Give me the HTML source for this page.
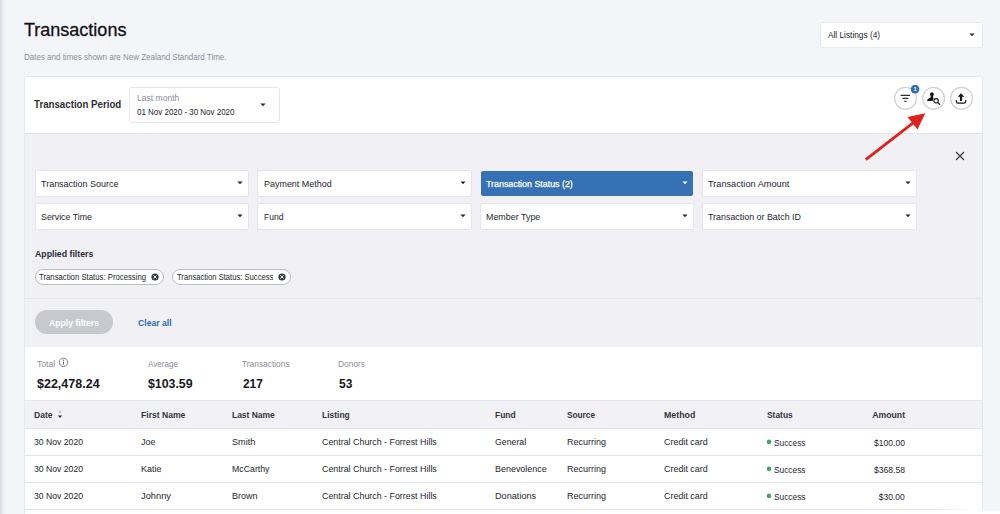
<!DOCTYPE html>
<html lang="en">
<head>
<meta charset="utf-8">
<title>Transactions</title>
<style>
html,body{margin:0;padding:0}
body{width:1000px;height:514px;overflow:hidden;position:relative;background:#f4f5f9;font-family:"Liberation Sans", sans-serif}
h1,h2,p,label,strong,a{margin:0;padding:0;font-weight:normal;text-decoration:none}
.a{position:absolute}
.t{position:absolute;white-space:nowrap;line-height:1;display:block}
.med{-webkit-text-stroke:0.25px #fff}
.ttl{-webkit-text-stroke:0.3px #101014}
.box{position:absolute;box-sizing:border-box}
.edge{left:0;top:0;width:5px;height:514px;background:linear-gradient(to right,#d4d7e1,#e4e6ee 35%,#f0f1f6 70%,#f4f5f9)}
.card{background:#fff;border:1px solid #e7e8ef;border-radius:2px}
.panel{background:#f0f0f5;border-top:1.5px solid #e3e3ea}
.rule{height:1px;background:#e4e4ea}
.dd{position:absolute;box-sizing:border-box;background:#fff;border:1px solid #e4e5ec;border-radius:2px;height:27px}
.dd.on{background:#3571b4;border-color:#3571b4}
.chip{position:absolute;box-sizing:border-box;background:#fff;border:1px solid #bcbcc5;border-radius:8px;height:16px}
.pill{border-radius:12px;background:#c8c9cf}
.thead{background:#f1f1f6;border-top:1px solid #e6e6ed}
.sep{position:absolute;left:25px;width:957px;height:1px;background:#e4e4eb}
.dot{width:4.4px;height:4.4px;border-radius:50%;background:#3fa66d}
</style>
</head>
<body>
<div class="a edge"></div>
<header>
<h1 class="t ttl" style="top:21px;font-size:18.6px;color:#101014;left:24.3px;transform:scaleX(0.9682);transform-origin:left 50%;">Transactions</h1>
<p class="t" style="top:53px;font-size:8.7px;color:#8d8d97;left:23.6px;transform:scaleX(0.9196);transform-origin:left 50%;">Dates and times shown are New Zealand Standard Time.</p>
<div class="select listing">
<div class="dd" style="left:820px;top:22px;width:163px;height:26px;border-color:#e9eaf1"></div>
<span class="t" style="top:31px;font-size:9.3px;color:#25252d;left:828px;transform:scaleX(0.8906);transform-origin:left 50%;">All Listings (4)</span>
<svg class="a" style="left:969px;top:33.1px" width="6" height="4" viewBox="0 0 6 4"><path d="M0.4 0.5H5.6L3 3.3Z" fill="#26262e"/></svg>
</div>
</header>
<main>
<div class="box card" style="left:24px;top:76px;width:959px;height:460px"></div>
<section class="toolbar">
<label class="t" style="top:99px;font-size:10.6px;color:#2e2e36;font-weight:bold;left:34.2px;transform:scaleX(0.9153);transform-origin:left 50%;">Transaction Period</label>
<div class="select period">
<div class="dd" style="left:128.7px;top:87px;width:151.3px;height:35.7px;border-color:#e5e7ef;border-radius:3px"></div>
<span class="t" style="top:94px;font-size:9px;color:#8d8d97;left:136.8px;transform:scaleX(0.9499);transform-origin:left 50%;">Last month</span>
<span class="t" style="top:108px;font-size:9.3px;color:#25252d;left:137px;transform:scaleX(0.8574);transform-origin:left 50%;">01 Nov 2020 - 30 Nov 2020</span>
<svg class="a" style="left:260.1px;top:103.1px" width="6" height="4" viewBox="0 0 6 4"><path d="M0.4 0.5H5.6L3 3.3Z" fill="#26262e"/></svg>
</div>
<div class="actions">
<div class="iconbtn" role="button"><svg class="a" style="left:892px;top:85px" width="28" height="28" viewBox="892 85 28 28"><circle cx="905.5" cy="98.3" r="10.9" fill="#fff" stroke="#cfd0d9" stroke-width="1.2"/><path d="M900.6 95.3H910.2M902.5 98.3H908.3M904.4 101.3H906.5" stroke="#2d2d36" stroke-width="1.3" fill="none"/><circle cx="915.1" cy="89.1" r="4.3" fill="#2f6fb7"/><text x="915.1" y="91.2" font-family="Liberation Sans, sans-serif" font-size="6" font-weight="bold" fill="#fff" text-anchor="middle">1</text></svg></div>
<div class="iconbtn" role="button"><svg class="a" style="left:920px;top:85px" width="28" height="28" viewBox="920 85 28 28"><circle cx="933.6" cy="98.3" r="10.9" fill="#fff" stroke="#cfd0d9" stroke-width="1.2"/><ellipse cx="931.9" cy="94.3" rx="1.9" ry="2.1" fill="#15151b"/><path d="M927.1 100.9C927.1 98.9 928.9 98.3 930.7 97.5V95.8H933.1V97.5C934.2 98 934.9 98.6 934.9 100.9Z" fill="#15151b"/><circle cx="936.1" cy="100.8" r="3.3" fill="#fff"/><circle cx="936.1" cy="100.8" r="2.2" fill="#fff" stroke="#15151b" stroke-width="1.1"/><path d="M937.8 102.6L939.7 104.4" stroke="#15151b" stroke-width="1.3" stroke-linecap="round"/></svg></div>
<div class="iconbtn" role="button"><svg class="a" style="left:948px;top:85px" width="28" height="28" viewBox="948 85 28 28"><circle cx="961.5" cy="98.3" r="10.9" fill="#fff" stroke="#cfd0d9" stroke-width="1.2"/><path d="M961 93.3L964.3 96.8H962.1V100.9H959.9V96.8H957.7Z" fill="#15151b"/><path d="M956.4 100.7V101.5C956.4 102.6 957.2 103.2 958.2 103.2H963.800C964.800 103.2 965.6 102.6 965.6 101.5V100.7" fill="none" stroke="#15151b" stroke-width="1.3" stroke-linecap="round"/></svg></div>
</div>
</section>
<section class="filters">
<div class="box panel" style="left:25px;top:133px;width:957px;height:214px"></div>
<div class="a rule" style="left:25px;top:298px;width:957px"></div>
<svg class="a" style="left:955px;top:150.8px" width="10" height="10" viewBox="0 0 10 10"><path d="M1 1L9 9M9 1L1 9" stroke="#3c3c44" stroke-width="1.2" fill="none"/></svg>
<div class="select">
<div class="dd" style="left:35px;top:170px;width:214px"></div>
<span class="t" style="top:180px;font-size:9.3px;color:#25252d;left:41px;transform:scaleX(0.9654);transform-origin:left 50%;">Transaction Source</span>
<svg class="a" style="left:236.7px;top:181.3px" width="6" height="4" viewBox="0 0 6 4"><path d="M0.4 0.5H5.6L3 3.3Z" fill="#26262e"/></svg>
</div>
<div class="select">
<div class="dd" style="left:257px;top:170px;width:215px"></div>
<span class="t" style="top:180px;font-size:9.3px;color:#25252d;left:263.5px;transform:scaleX(0.9633);transform-origin:left 50%;">Payment Method</span>
<svg class="a" style="left:459.7px;top:181.3px" width="6" height="4" viewBox="0 0 6 4"><path d="M0.4 0.5H5.6L3 3.3Z" fill="#26262e"/></svg>
</div>
<div class="select active">
<div class="dd on" style="left:481px;top:171px;width:212px;height:25px"></div>
<span class="t med" style="top:180px;font-size:9.3px;color:#ffffff;left:485.7px;transform:scaleX(0.9525);transform-origin:left 50%;">Transaction Status (2)</span>
<svg class="a" style="left:681.7px;top:181.3px" width="6" height="4" viewBox="0 0 6 4"><path d="M0.4 0.5H5.6L3 3.3Z" fill="#fff"/></svg>
</div>
<div class="select">
<div class="dd" style="left:702px;top:170px;width:215px"></div>
<span class="t" style="top:180px;font-size:9.3px;color:#25252d;left:708.2px;transform:scaleX(0.9873);transform-origin:left 50%;">Transaction Amount</span>
<svg class="a" style="left:904.7px;top:181.3px" width="6" height="4" viewBox="0 0 6 4"><path d="M0.4 0.5H5.6L3 3.3Z" fill="#26262e"/></svg>
</div>
<div class="select">
<div class="dd" style="left:35px;top:203px;width:214px"></div>
<span class="t" style="top:213px;font-size:9.3px;color:#25252d;left:41px;transform:scaleX(0.9491);transform-origin:left 50%;">Service Time</span>
<svg class="a" style="left:236.7px;top:214.3px" width="6" height="4" viewBox="0 0 6 4"><path d="M0.4 0.5H5.6L3 3.3Z" fill="#26262e"/></svg>
</div>
<div class="select">
<div class="dd" style="left:257px;top:203px;width:215px"></div>
<span class="t" style="top:213px;font-size:9.3px;color:#25252d;left:263.5px;transform:scaleX(0.9197);transform-origin:left 50%;">Fund</span>
<svg class="a" style="left:459.7px;top:214.3px" width="6" height="4" viewBox="0 0 6 4"><path d="M0.4 0.5H5.6L3 3.3Z" fill="#26262e"/></svg>
</div>
<div class="select">
<div class="dd" style="left:480px;top:203px;width:214px"></div>
<span class="t" style="top:213px;font-size:9.3px;color:#25252d;left:485.7px;transform:scaleX(0.9581);transform-origin:left 50%;">Member Type</span>
<svg class="a" style="left:681.7px;top:214.3px" width="6" height="4" viewBox="0 0 6 4"><path d="M0.4 0.5H5.6L3 3.3Z" fill="#26262e"/></svg>
</div>
<div class="select">
<div class="dd" style="left:702px;top:203px;width:215px"></div>
<span class="t" style="top:213px;font-size:9.3px;color:#25252d;left:708.2px;transform:scaleX(0.9555);transform-origin:left 50%;">Transaction or Batch ID</span>
<svg class="a" style="left:904.7px;top:214.3px" width="6" height="4" viewBox="0 0 6 4"><path d="M0.4 0.5H5.6L3 3.3Z" fill="#26262e"/></svg>
</div>
<h2 class="t" style="top:250px;font-size:9.3px;color:#2a2a32;font-weight:bold;left:34.5px;transform:scaleX(0.9403);transform-origin:left 50%;">Applied filters</h2>
<div class="tag">
<div class="chip" style="left:35px;top:269px;width:129px"></div>
<span class="t" style="top:274px;font-size:8.2px;color:#25252d;left:39.4px;transform:scaleX(0.9477);transform-origin:left 50%;">Transaction Status: Processing</span>
<svg class="a" style="left:151px;top:273.4px" width="8" height="8" viewBox="0 0 8 8"><circle cx="4" cy="4" r="3.6" fill="#33333b"/><path d="M2.6 2.6L5.4 5.4M5.4 2.6L2.6 5.4" stroke="#fff" stroke-width="1" stroke-linecap="round"/></svg>
</div>
<div class="tag">
<div class="chip" style="left:172px;top:269px;width:119px"></div>
<span class="t" style="top:274px;font-size:8.2px;color:#25252d;left:176.8px;transform:scaleX(0.9309);transform-origin:left 50%;">Transaction Status: Success</span>
<svg class="a" style="left:277.9px;top:273.4px" width="8" height="8" viewBox="0 0 8 8"><circle cx="4" cy="4" r="3.6" fill="#33333b"/><path d="M2.6 2.6L5.4 5.4M5.4 2.6L2.6 5.4" stroke="#fff" stroke-width="1" stroke-linecap="round"/></svg>
</div>
<div class="buttons">
<div class="box pill" style="left:35px;top:310px;width:78px;height:24px"></div>
<span class="t" style="top:318px;font-size:9.6px;color:#ffffff;font-weight:bold;left:49.2px;transform:scaleX(0.9017);transform-origin:left 50%;">Apply filters</span>
<a class="t" style="top:318px;font-size:9.6px;color:#2b6cb3;font-weight:bold;left:137.9px;transform:scaleX(0.8997);transform-origin:left 50%;">Clear all</a>
</div>
</section>
<section class="stats">
<div class="stat">
<span class="t" style="top:360px;font-size:9px;color:#8d8d97;left:36.6px;transform:scaleX(0.9571);transform-origin:left 50%;">Total</span>
<svg class="a" style="left:58px;top:357px" width="11" height="11" viewBox="58 357 11 11"><circle cx="63.5" cy="362.3" r="4.2" fill="none" stroke="#70707a" stroke-width="0.9"/><path d="M63.5 361.6V364.5" stroke="#60606a" stroke-width="1"/><circle cx="63.5" cy="360.2" r="0.65" fill="#60606a"/></svg>
<strong class="t" style="top:378px;font-size:12.8px;color:#17171c;font-weight:bold;left:37px;transform:scaleX(0.9772);transform-origin:left 50%;">$22,478.24</strong>
</div>
<div class="stat">
<span class="t" style="top:360px;font-size:9px;color:#8d8d97;left:148px;transform:scaleX(0.8993);transform-origin:left 50%;">Average</span>
<strong class="t" style="top:378px;font-size:12.8px;color:#17171c;font-weight:bold;left:148.4px;transform:scaleX(0.9640);transform-origin:left 50%;">$103.59</strong>
</div>
<div class="stat">
<span class="t" style="top:360px;font-size:9px;color:#8d8d97;left:242.4px;transform:scaleX(0.9299);transform-origin:left 50%;">Transactions</span>
<strong class="t" style="top:378px;font-size:12.8px;color:#17171c;font-weight:bold;left:242.6px;transform:scaleX(0.9270);transform-origin:left 50%;">217</strong>
</div>
<div class="stat">
<span class="t" style="top:360px;font-size:9px;color:#8d8d97;left:338.4px;transform:scaleX(0.9236);transform-origin:left 50%;">Donors</span>
<strong class="t" style="top:378px;font-size:12.8px;color:#17171c;font-weight:bold;left:338.6px;transform:scaleX(0.9414);transform-origin:left 50%;">53</strong>
</div>
</section>
<section class="table" role="table">
<div class="box thead" style="left:25px;top:400px;width:957px;height:28.5px"></div>
<div class="sep" style="top:428px"></div>
<div class="sep" style="top:455px"></div>
<div class="sep" style="top:482px"></div>
<div class="sep" style="top:509px"></div>
<div class="tr head" role="row">
<span class="t" style="top:411px;font-size:9.3px;color:#34343c;font-weight:bold;left:34.4px;transform:scaleX(0.9228);transform-origin:left 50%;">Date</span>
<svg class="a" style="left:56.8px;top:409px" width="6" height="10" viewBox="0 0 6 10"><path d="M1.4 3.6L3 1.4L4.6 3.6Z" fill="#a9a9b2"/><path d="M0.9 6.4L3 9L5.1 6.4Z" fill="#26262e"/></svg>
<span class="t" style="top:411px;font-size:9.3px;color:#34343c;font-weight:bold;left:141px;transform:scaleX(0.9238);transform-origin:left 50%;">First Name</span>
<span class="t" style="top:411px;font-size:9.3px;color:#34343c;font-weight:bold;left:231.7px;transform:scaleX(0.9100);transform-origin:left 50%;">Last Name</span>
<span class="t" style="top:411px;font-size:9.3px;color:#34343c;font-weight:bold;left:321.7px;transform:scaleX(0.9119);transform-origin:left 50%;">Listing</span>
<span class="t" style="top:411px;font-size:9.3px;color:#34343c;font-weight:bold;left:494.5px;transform:scaleX(0.9111);transform-origin:left 50%;">Fund</span>
<span class="t" style="top:411px;font-size:9.3px;color:#34343c;font-weight:bold;left:567.2px;transform:scaleX(0.8880);transform-origin:left 50%;">Source</span>
<span class="t" style="top:411px;font-size:9.3px;color:#34343c;font-weight:bold;left:664.2px;transform:scaleX(0.9467);transform-origin:left 50%;">Method</span>
<span class="t" style="top:411px;font-size:9.3px;color:#34343c;font-weight:bold;left:766.5px;transform:scaleX(0.9042);transform-origin:left 50%;">Status</span>
<span class="t" style="top:411px;font-size:9.3px;color:#34343c;font-weight:bold;right:95px;transform:scaleX(0.9395);transform-origin:right 50%;">Amount</span>
</div>
<div class="tr" role="row">
<span class="t" style="top:437px;font-size:9.4px;color:#25252d;left:34px;transform:scaleX(0.9215);transform-origin:left 50%;">30 Nov 2020</span>
<span class="t" style="top:437px;font-size:9.4px;color:#25252d;left:141px;transform:scaleX(0.9521);transform-origin:left 50%;">Joe</span>
<span class="t" style="top:437px;font-size:9.4px;color:#25252d;left:231.7px;transform:scaleX(0.9721);transform-origin:left 50%;">Smith</span>
<span class="t" style="top:437px;font-size:9.4px;color:#25252d;left:321.7px;transform:scaleX(0.9457);transform-origin:left 50%;">Central Church - Forrest Hills</span>
<span class="t" style="top:437px;font-size:9.4px;color:#25252d;left:494.5px;transform:scaleX(0.9353);transform-origin:left 50%;">General</span>
<span class="t" style="top:437px;font-size:9.4px;color:#25252d;left:567.2px;transform:scaleX(0.9596);transform-origin:left 50%;">Recurring</span>
<span class="t" style="top:437px;font-size:9.4px;color:#25252d;left:664.2px;transform:scaleX(0.9551);transform-origin:left 50%;">Credit card</span>
<svg class="a" style="left:766px;top:439px" width="6" height="6" viewBox="0 0 6 6"><circle cx="3" cy="2.9" r="2.3" fill="#3fa66d"/></svg>
<span class="t" style="top:438px;font-size:9.8px;color:#25252d;left:774.4px;transform:scaleX(0.8506);transform-origin:left 50%;">Success</span>
<span class="t" style="top:438px;font-size:9.4px;color:#25252d;right:95px;transform:scaleX(0.9088);transform-origin:right 50%;">$100.00</span>
</div>
<div class="tr" role="row">
<span class="t" style="top:464px;font-size:9.4px;color:#25252d;left:34px;transform:scaleX(0.9215);transform-origin:left 50%;">30 Nov 2020</span>
<span class="t" style="top:464px;font-size:9.4px;color:#25252d;left:141px;transform:scaleX(0.9544);transform-origin:left 50%;">Katie</span>
<span class="t" style="top:464px;font-size:9.4px;color:#25252d;left:231.7px;transform:scaleX(0.9349);transform-origin:left 50%;">McCarthy</span>
<span class="t" style="top:464px;font-size:9.4px;color:#25252d;left:321.7px;transform:scaleX(0.9457);transform-origin:left 50%;">Central Church - Forrest Hills</span>
<span class="t" style="top:464px;font-size:9.4px;color:#25252d;left:494.5px;transform:scaleX(0.9535);transform-origin:left 50%;">Benevolence</span>
<span class="t" style="top:464px;font-size:9.4px;color:#25252d;left:567.2px;transform:scaleX(0.9596);transform-origin:left 50%;">Recurring</span>
<span class="t" style="top:464px;font-size:9.4px;color:#25252d;left:664.2px;transform:scaleX(0.9551);transform-origin:left 50%;">Credit card</span>
<svg class="a" style="left:766px;top:466px" width="6" height="6" viewBox="0 0 6 6"><circle cx="3" cy="2.9" r="2.3" fill="#3fa66d"/></svg>
<span class="t" style="top:465px;font-size:9.8px;color:#25252d;left:774.4px;transform:scaleX(0.8506);transform-origin:left 50%;">Success</span>
<span class="t" style="top:465px;font-size:9.4px;color:#25252d;right:95px;transform:scaleX(0.9088);transform-origin:right 50%;">$368.58</span>
</div>
<div class="tr" role="row">
<span class="t" style="top:491px;font-size:9.4px;color:#25252d;left:34px;transform:scaleX(0.9215);transform-origin:left 50%;">30 Nov 2020</span>
<span class="t" style="top:491px;font-size:9.4px;color:#25252d;left:141px;transform:scaleX(0.9922);transform-origin:left 50%;">Johnny</span>
<span class="t" style="top:491px;font-size:9.4px;color:#25252d;left:231.7px;transform:scaleX(0.9594);transform-origin:left 50%;">Brown</span>
<span class="t" style="top:491px;font-size:9.4px;color:#25252d;left:321.7px;transform:scaleX(0.9457);transform-origin:left 50%;">Central Church - Forrest Hills</span>
<span class="t" style="top:491px;font-size:9.4px;color:#25252d;left:494.5px;transform:scaleX(0.9759);transform-origin:left 50%;">Donations</span>
<span class="t" style="top:491px;font-size:9.4px;color:#25252d;left:567.2px;transform:scaleX(0.9596);transform-origin:left 50%;">Recurring</span>
<span class="t" style="top:491px;font-size:9.4px;color:#25252d;left:664.2px;transform:scaleX(0.9551);transform-origin:left 50%;">Credit card</span>
<svg class="a" style="left:766px;top:493px" width="6" height="6" viewBox="0 0 6 6"><circle cx="3" cy="2.9" r="2.3" fill="#3fa66d"/></svg>
<span class="t" style="top:492px;font-size:9.8px;color:#25252d;left:774.4px;transform:scaleX(0.8506);transform-origin:left 50%;">Success</span>
<span class="t" style="top:492px;font-size:9.4px;color:#25252d;right:95px;transform:scaleX(0.9063);transform-origin:right 50%;">$30.00</span>
</div>
</section>
</main>
<svg class="a" style="left:850px;top:100px" width="100" height="70" viewBox="850 100 100 70"><path d="M865.7 159.6L913.5 122.7" stroke="#e0211b" stroke-width="2.8" fill="none"/><path d="M925.3 113.3L907.5 117.1L917.5 129.4Z" fill="#e0211b"/></svg>
<div class="a" style="left:930px;top:509px;width:53px;height:1px;background:linear-gradient(to right,rgba(255,255,255,0),#fff 80%)"></div>
<div class="a" style="left:945px;top:510px;width:55px;height:4px;background:linear-gradient(to bottom,rgba(255,255,255,0),#fff 45%)"></div>
</body>
</html>
